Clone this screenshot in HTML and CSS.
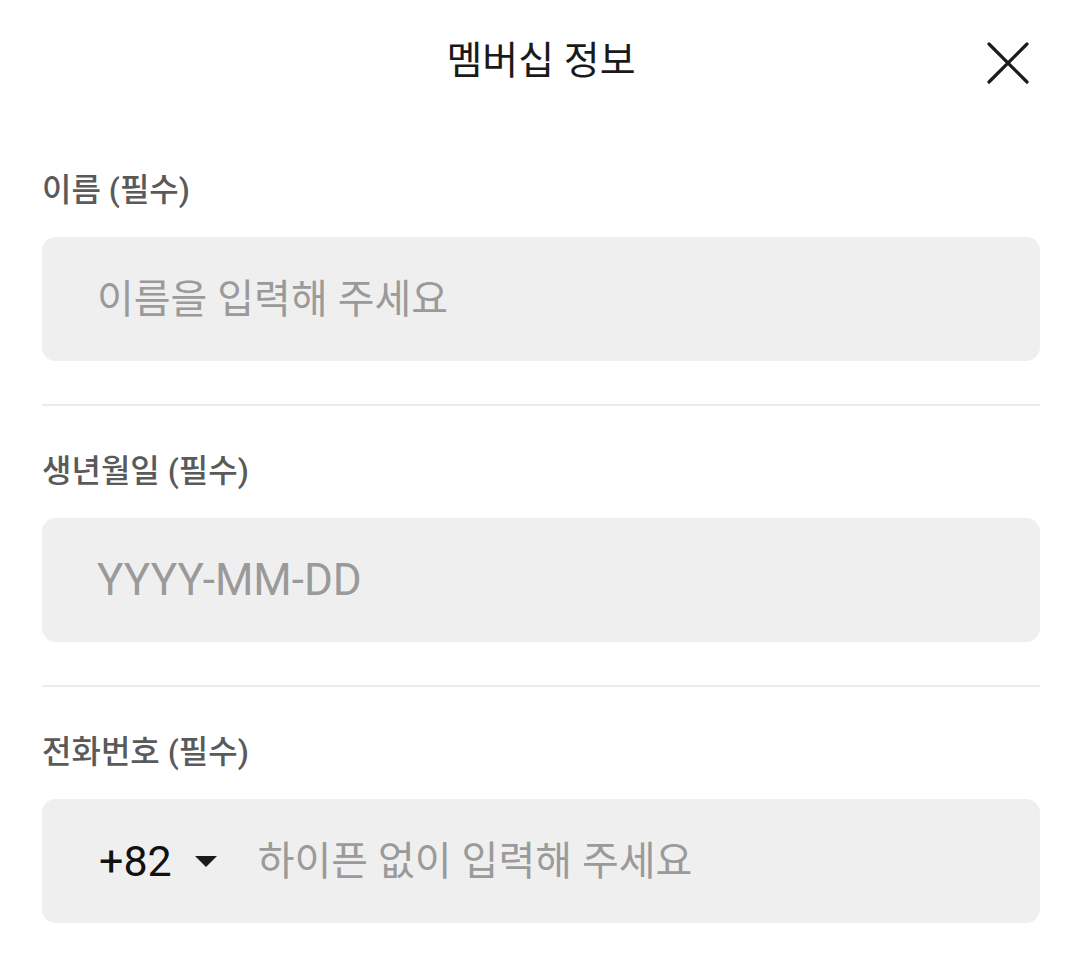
FILE: index.html
```html
<!DOCTYPE html>
<html lang="ko">
<head>
  <meta charset="UTF-8" />
  <meta name="viewport" content="width=device-width, initial-scale=1.0" />
  <title>멤버십 정보</title>
  <link rel="stylesheet" href="styles.css">
</head>
<body>
  <header class="top-bar">
    <h1 class="title">멤버십 정보</h1>
    <button class="close-btn" aria-label="닫기">
      <svg width="44" height="44" viewBox="0 0 44 44">
        <path d="M3 3 L41 41 M41 3 L3 41" stroke="#1c1c1c" stroke-width="3.2" stroke-linecap="round" fill="none" />
      </svg>
    </button>
  </header>

  <form class="form">
    <div class="field">
      <label class="field-label" for="name">이름 (필수)</label>
      <input id="name" class="field-input" type="text" placeholder="이름을 입력해 주세요" />
    </div>
    <hr class="divider" />

    <div class="field">
      <label class="field-label" for="birth">생년월일 (필수)</label>
      <input id="birth" class="field-input latin" type="text" placeholder="YYYY-MM-DD" />
    </div>
    <hr class="divider" />

    <div class="field">
      <label class="field-label" for="phone">전화번호 (필수)</label>
      <div class="field-input phone-box">
        <span class="country-code">+82</span>
        <span class="caret"></span>
        <input id="phone" class="phone-input" type="tel" placeholder="하이픈 없이 입력해 주세요" />
      </div>
    </div>
  </form>
</body>
</html>
```

FILE: styles.css
```css
body {
  margin: 0;
  padding: 0 40px 0 42px;
  background: #fff;
  font-family: Roboto, "Noto Sans CJK KR", sans-serif;
  color: #1a1a1a;
}

.top-bar {
  position: relative;
  height: 124px;
  display: flex;
  align-items: center;
  justify-content: center;
}

.title {
  margin: 0;
  font-size: 39px;
  font-weight: 400;
  line-height: 1;
  position: relative;
  top: -1px;
}

.close-btn {
  position: absolute;
  right: 10px;
  top: 41px;
  padding: 0;
  border: 0;
  background: none;
  width: 44px;
  height: 44px;
}

.form {
  display: flex;
  flex-direction: column;
  margin-top: 46px;
}

.field {
  display: flex;
  flex-direction: column;
}

.field-label {
  font-size: 32px;
  font-weight: 500;
  color: #5a5a5a;
  line-height: 40px;
  margin-bottom: 27px;
}

.field-input {
  box-sizing: border-box;
  width: 100%;
  height: 124px;
  border: 0;
  border-radius: 14px;
  background: #efefef;
  padding: 0 55px;
  font-family: inherit;
  font-size: 40px;
  color: #1a1a1a;
  outline: none;
}

.field-input.latin {
  font-size: 44px;
}

.field-input::placeholder,
.phone-input::placeholder {
  color: #9a9a9a;
}

.divider {
  border: 0;
  height: 2px;
  background: #ececec;
  margin: 43px 0 45px;
}

.phone-box {
  display: flex;
  align-items: center;
  padding-left: 57px;
}

.country-code {
  font-size: 43px;
  color: #111;
}

.caret {
  width: 0;
  height: 0;
  border-left: 11px solid transparent;
  border-right: 11px solid transparent;
  border-top: 11px solid #1a1a1a;
  margin: 0 41px 0 23px;
}

.phone-input {
  flex: 1;
  border: 0;
  background: none;
  padding: 0;
  font-family: inherit;
  font-size: 40px;
  outline: none;
  min-width: 0;
}
```
